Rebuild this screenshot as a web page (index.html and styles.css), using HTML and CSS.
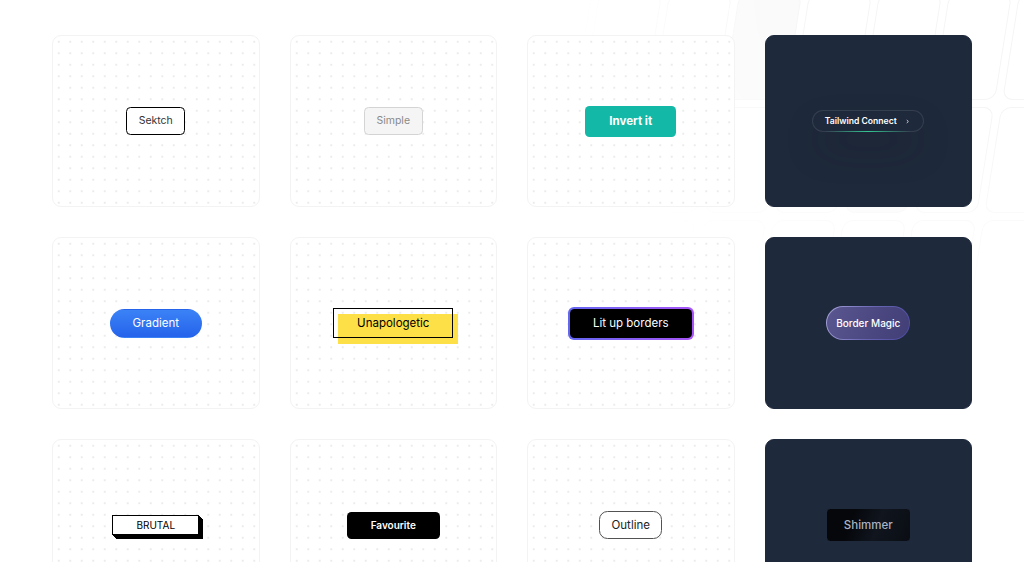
FILE: index.html
```html
<!DOCTYPE html>
<html lang="en">
<head>
  <meta charset="UTF-8" />
  <meta name="viewport" content="width=device-width, initial-scale=1.0"/>
  <title>Tailwind CSS Buttons</title>
  <link rel="stylesheet" href="styles.css">
</head>
<body>
  <!-- faint slanted tiles behind the top right corner -->
  <div class="backdrop">
    <div class="tiles">
      <div class="tile"></div><div class="tile"></div><div class="tile"></div><div class="tile"></div><div class="tile filled"></div><div class="tile"></div><div class="tile"></div><div class="tile"></div><div class="tile"></div>
      <div class="tile"></div><div class="tile"></div><div class="tile"></div><div class="tile"></div><div class="tile"></div><div class="tile"></div><div class="tile filled"></div><div class="tile"></div><div class="tile"></div>
      <div class="tile"></div><div class="tile"></div><div class="tile"></div><div class="tile"></div><div class="tile"></div><div class="tile"></div><div class="tile"></div><div class="tile"></div><div class="tile"></div>
      <div class="tile"></div><div class="tile"></div><div class="tile"></div><div class="tile"></div><div class="tile"></div><div class="tile"></div><div class="tile"></div><div class="tile"></div><div class="tile"></div>
    </div>
  </div>

  <main class="grid">
    <div class="card">
      <button class="btn sketch">Sektch</button>
    </div>
    <div class="card">
      <button class="btn simple">Simple</button>
    </div>
    <div class="card">
      <button class="btn invert">Invert it</button>
    </div>
    <div class="card dark">
      <button class="connect">
        <span class="connect-inner">
          <span>Tailwind Connect</span>
          <svg width="9" height="9" viewBox="0 0 24 24" fill="none"><path d="M10.75 8.75L14.25 12L10.75 15.25" stroke="currentColor" stroke-linecap="round" stroke-linejoin="round" stroke-width="2"/></svg>
        </span>
        <span class="connect-glow"></span>
      </button>
    </div>

    <div class="card">
      <button class="btn gradient">Gradient</button>
    </div>
    <div class="card">
      <span class="unapologetic-wrap">
        <span class="unapologetic-back"></span>
        <button class="btn unapologetic">Unapologetic</button>
      </span>
    </div>
    <div class="card">
      <button class="lit">
        <span class="lit-inner">Lit up borders</span>
      </button>
    </div>
    <div class="card dark">
      <button class="magic">
        <span class="magic-inner">Border Magic</span>
      </button>
    </div>

    <div class="card">
      <button class="btn brutal">Brutal</button>
    </div>
    <div class="card">
      <button class="btn favourite">Favourite</button>
    </div>
    <div class="card">
      <button class="btn outline">Outline</button>
    </div>
    <div class="card dark">
      <button class="btn shimmer">Shimmer</button>
    </div>
  </main>
</body>
</html>
```

FILE: styles.css
```css
html, body {
  margin: 0;
  padding: 0;
  background: #fff;
  font-family: Inter, "Noto Sans", sans-serif;
  overflow: hidden;
  height: 100%;
}

/* background tiles */
.backdrop {
  position: absolute;
  top: 0;
  right: 0;
  width: 600px;
  height: 380px;
  overflow: hidden;
  pointer-events: none;
  z-index: 0;
  -webkit-mask-image: radial-gradient(ellipse 80% 100% at 90% 0%, #000 30%, transparent 85%);
  mask-image: radial-gradient(ellipse 80% 100% at 90% 0%, #000 30%, transparent 85%);
}

.tiles {
  margin: -6px 0 0 35px;
  display: grid;
  grid-template-columns: repeat(9, 63px);
  grid-auto-rows: 106px;
  gap: 7px;
  transform: skewX(-9deg);
  transform-origin: top left;
}

.tile {
  border: 1px solid #f5f5f5;
  border-radius: 10px;
}

.tile.filled {
  background: #f9f9f9;
}

/* cards */
.grid {
  position: relative;
  z-index: 1;
  width: 920px;
  margin: 0 auto;
  padding-top: 35px;
  display: grid;
  grid-template-columns: repeat(4, 1fr);
  grid-auto-rows: 172px;
  gap: 30px;
}

.card {
  display: flex;
  align-items: center;
  justify-content: center;
  border: 1px solid #f3f3f3;
  border-radius: 9px;
  background-color: #fff;
  background-image: radial-gradient(circle, #ebebeb 0.7px, transparent 1px);
  background-size: 11.5px 11.5px;
  background-position: 0 0;
}

.card.dark {
  background: #1e293b;
  border-color: #1e293b;
}

/* buttons */
button {
  font-family: Inter, "Noto Sans", sans-serif;
  cursor: pointer;
  margin: 0;
}

.btn {
  padding: 6px 23px;
  font-size: 11.5px;
  line-height: 17px;
  border: 1px solid transparent;
  background: none;
}

.sketch {
  padding: 6px 11.5px;
  font-size: 10.5px;
  line-height: 14.5px;
  border-radius: 4.5px;
  border-color: #000;
  background: #fff;
  color: #333;
}

.simple {
  padding: 6px 11.5px;
  font-size: 10.5px;
  line-height: 14.5px;
  border-radius: 4.5px;
  border-color: #d4d4d4;
  background: #f5f5f5;
  color: #8a8a8a;
}

.invert {
  border-width: 1.5px;
  border-radius: 4.5px;
  background: #14b8a6;
  color: #fff;
  font-weight: 700;
}

.connect {
  position: relative;
  padding: 1px;
  border: none;
  border-radius: 999px;
  background: #1e293b;
  box-shadow: 0 18px 36px -9px #18181b;
  color: #fff;
}

.connect-inner {
  display: flex;
  align-items: center;
  gap: 6px;
  padding: 1.5px 11.5px;
  border-radius: 999px;
  background: #1e293b;
  box-shadow: 0 0 0 1px rgba(255, 255, 255, 0.1);
  font-size: 8.6px;
  font-weight: 600;
  line-height: 17px;
}

.connect-glow {
  position: absolute;
  bottom: 0;
  left: 13px;
  width: calc(100% - 26px);
  height: 1px;
  background: linear-gradient(to right, rgba(52, 211, 153, 0), rgba(52, 211, 153, 0.9), rgba(52, 211, 153, 0));
}

.gradient {
  padding: 6px 22px;
  border-radius: 999px;
  background: linear-gradient(to bottom, #3b82f6, #2563eb);
  color: #fff;
  line-height: 15px;
}

/* yellow block sits behind the bordered button */
.unapologetic-wrap {
  position: relative;
  display: inline-block;
  isolation: isolate;
}

.unapologetic-back {
  position: absolute;
  right: -5px;
  bottom: -6px;
  width: 100%;
  height: 100%;
  background: #fde047;
  z-index: -1;
}

.unapologetic {
  display: block;
  border-color: #000;
  color: #000;
  line-height: 16px;
}

.lit {
  padding: 2px;
  border: none;
  border-radius: 6px;
  background: linear-gradient(to right, #6366f1, #a855f7);
}

.lit-inner {
  display: block;
  padding: 6px 23px;
  border-radius: 4.5px;
  background: #000;
  color: #fff;
  font-size: 11.5px;
  line-height: 17px;
}

.magic {
  display: inline-flex;
  height: 34px;
  padding: 1px;
  border: none;
  border-radius: 999px;
  background: linear-gradient(110deg, #aaa5dc, #6a66b4 50%, #4a49a0);
}

.magic-inner {
  display: inline-flex;
  align-items: center;
  padding: 0 9px;
  border-radius: 999px;
  background: linear-gradient(110deg, #5a568f, #4a467f 60%, #423e76);
  color: #fff;
  font-size: 10px;
  font-weight: 500;
}

.brutal {
  padding: 1.5px 23px;
  border: 1.5px solid #000;
  background: #fff;
  color: #000;
  font-size: 10px;
  line-height: 14.5px;
  text-transform: uppercase;
  box-shadow: 1px 1px #000, 2px 2px #000, 3px 3px #000, 4px 4px #000;
}

.favourite {
  border-radius: 4.5px;
  background: #000;
  color: #fff;
  font-size: 10px;
  font-weight: 600;
  line-height: 13px;
}

.outline {
  padding: 6px 11.5px;
  border-radius: 8.5px;
  border-color: #525252;
  background: #fff;
  color: #222;
  line-height: 14.5px;
}

.shimmer {
  height: 34px;
  padding: 0 17px;
  border-radius: 4.5px;
  border-color: #1e293b;
  background: linear-gradient(110deg, #05070b 30%, #10151e 60%, #0a0d13);
  color: #a9b3c4;
  font-weight: 500;
}
```
